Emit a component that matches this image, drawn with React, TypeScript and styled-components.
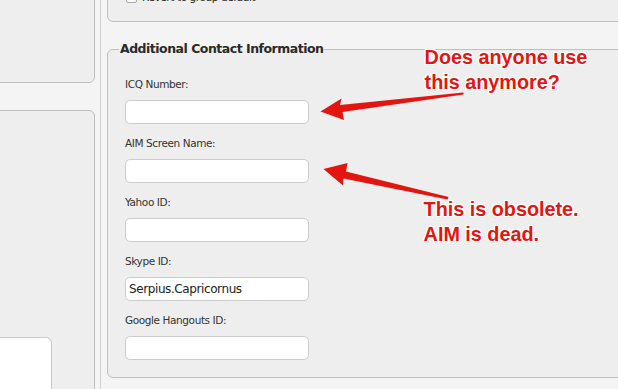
import React from 'react'
import styled, { createGlobalStyle } from 'styled-components'

const GlobalStyle = createGlobalStyle`
  html, body {
    margin: 0;
    padding: 0;
  }
  body {
    background: #f4f4f4;
    overflow: hidden;
    font-family: "DejaVu Sans", Verdana, sans-serif;
  }
`

const Page = styled.div`
  position: relative;
  display: flex;
  width: 618px;
  height: 389px;
  overflow: hidden;
  background: #f4f4f4;
`

const LeftPanel = styled.div`
  flex: none;
  width: 95px;
  display: flex;
  flex-direction: column;
  gap: 27px;
`

const SideBox = styled.div`
  box-sizing: border-box;
  margin-left: -10px;
  background: #eeeeee;
  border: 1px solid #bfbfbf;
  border-radius: 6px;
`

const TopSideBox = styled(SideBox)`
  margin-top: -20px;
  height: 103px;
`

const LowerSideBox = styled(SideBox)`
  flex: 1;
  margin-bottom: -10px;
  display: flex;
  flex-direction: column;
  justify-content: flex-end;
`

const WhiteBox = styled.div`
  box-sizing: border-box;
  width: 61px;
  height: 61px;
  background: #ffffff;
  border: 1px solid #c9c9c9;
  border-left: none;
  border-bottom: none;
  border-radius: 0 6px 0 0;
`

const Divider = styled.div`
  flex: none;
  width: 1px;
  margin-left: 5px;
  background: #d0d0d0;
`

const RightPanel = styled.div`
  flex: 1;
  display: flex;
  flex-direction: column;
  padding-left: 6px;
  margin-right: -10px;
`

const TopSection = styled.div`
  box-sizing: border-box;
  margin-top: -30px;
  height: 52px;
  display: flex;
  align-items: flex-end;
  padding: 0 0 17px 18px;
  background: #eeeeee;
  border: 1px solid #bfbfbf;
  border-radius: 6px;
`

const CheckRow = styled.label`
  display: flex;
  align-items: center;
  gap: 5px;
  font-size: 10.5px;
  line-height: 14px;
  letter-spacing: -0.4px;
  color: #222;
`

const CheckBox = styled.span`
  box-sizing: border-box;
  width: 11px;
  height: 11px;
  background: #f8f8f8;
  border: 1px solid #a9a9a9;
  border-radius: 2px;
`

const Fieldset = styled.fieldset`
  margin: 19px 0 0 0;
  padding: 0;
  min-width: 0;
  background: #eeeeee;
  border: 1px solid #bfbfbf;
  border-radius: 6px;
`

const Legend = styled.legend`
  margin-left: 11px;
  padding: 0 1px;
  font-size: 12.5px;
  font-weight: bold;
  line-height: 16px;
  letter-spacing: -0.5px;
  color: #2a2a2a;
`

const FieldList = styled.div`
  display: flex;
  flex-direction: column;
  gap: 12px;
  padding: 20px 0 17px 17px;
`

const Field = styled.div`
  display: flex;
  flex-direction: column;
  gap: 9px;
`

const Label = styled.label`
  font-size: 10.5px;
  line-height: 14px;
  letter-spacing: -0.4px;
  color: #333;
`

const TextBox = styled.input`
  box-sizing: border-box;
  width: 184px;
  height: 24px;
  margin: 0;
  padding: 0 3px;
  background: #ffffff;
  border: 1px solid #cccccc;
  border-radius: 5px;
  font-family: "DejaVu Sans", Verdana, sans-serif;
  font-size: 12px;
  letter-spacing: -0.4px;
  color: #222;
  outline: none;
`

const Note = styled.div<{ $left: number; $top: number }>`
  position: absolute;
  left: ${p => p.$left}px;
  top: ${p => p.$top}px;
  font-family: "Liberation Sans", Arial, sans-serif;
  font-weight: bold;
  font-size: 19.8px;
  line-height: 25px;
  color: #e3150f;
  white-space: nowrap;
  text-shadow:
    1px 0 0 #fff, -1px 0 0 #fff, 0 1px 0 #fff, 0 -1px 0 #fff,
    1px 1px 0 #fff, -1px -1px 0 #fff, 1px -1px 0 #fff, -1px 1px 0 #fff;
`

const ArrowLayer = styled.svg`
  position: absolute;
  left: 0;
  top: 0;
  pointer-events: none;
`

const fields = [
  { label: 'ICQ Number:', value: '' },
  { label: 'AIM Screen Name:', value: '' },
  { label: 'Yahoo ID:', value: '' },
  { label: 'Skype ID:', value: 'Serpius.Capricornus' },
  { label: 'Google Hangouts ID:', value: '' },
]

export default function App() {
  return (
    <>
      <GlobalStyle />
      <Page>
        <LeftPanel>
          <TopSideBox />
          <LowerSideBox>
            <WhiteBox />
          </LowerSideBox>
        </LeftPanel>
        <Divider />
        <RightPanel>
          <TopSection>
            <CheckRow>
              <CheckBox />
              Revert to group default
            </CheckRow>
          </TopSection>
          <Fieldset>
            <Legend>Additional Contact Information</Legend>
            <FieldList>
              {fields.map(f => (
                <Field key={f.label}>
                  <Label>{f.label}</Label>
                  <TextBox type="text" defaultValue={f.value} />
                </Field>
              ))}
            </FieldList>
          </Fieldset>
        </RightPanel>

        <ArrowLayer width="618" height="389" viewBox="0 0 618 389">
          <polygon
            fill="#e3150f"
            points="320.5,111.5 341.5,98.5 340,105 463.5,92.5 463.5,94.5 342.5,112 344,120"
          />
          <polygon
            fill="#e3150f"
            points="323.5,169 347.5,163 346,171.5 448.5,197 447.5,199.5 343.5,178.5 343,185.5"
          />
        </ArrowLayer>
        <Note $left={424.6} $top={45}>
          Does anyone use
          <br />
          this anymore?
        </Note>
        <Note $left={423.6} $top={197}>
          This is obsolete.
          <br />
          AIM is dead.
        </Note>
      </Page>
    </>
  )
}
